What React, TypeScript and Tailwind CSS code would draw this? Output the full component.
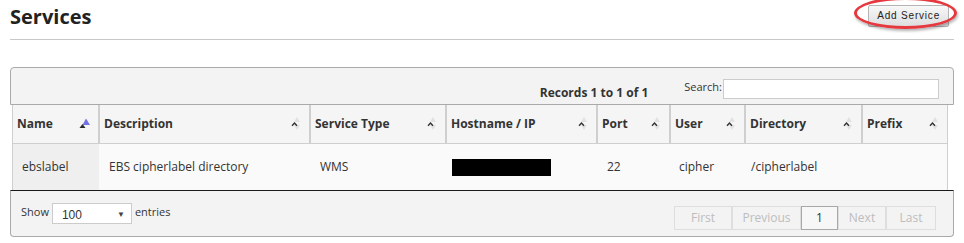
import React from 'react';

type Col = { key: string; label: string; width: number; sorted?: boolean; pad: string };

const columns: Col[] = [
  { key: 'name', label: 'Name', width: 87, sorted: true, pad: 'pl-[9px]' },
  { key: 'description', label: 'Description', width: 211, pad: 'pl-[10px]' },
  { key: 'type', label: 'Service Type', width: 136, pad: 'pl-[10px]' },
  { key: 'host', label: 'Hostname / IP', width: 151, pad: 'pl-[6px]' },
  { key: 'port', label: 'Port', width: 73, pad: 'pl-[10px]' },
  { key: 'user', label: 'User', width: 75, pad: 'pl-[9px]' },
  { key: 'directory', label: 'Directory', width: 117, pad: 'pl-[6px]' },
  { key: 'prefix', label: 'Prefix', width: 86, pad: 'pl-[6px]' },
];

const SortIcon: React.FC = () => (
  <svg width="14" height="18" viewBox="0 0 14 18" className="shrink-0">
    <polygon points="8,2 11,7 5,7" fill="#e2e2e2" />
    <polygon points="5,10 11,10 8,15" fill="#e2e2e2" />
    <path d="M3 10.8 L5.5 8 L8 10.8" stroke="#333" strokeWidth="1.4" fill="none" />
  </svg>
);

const SortedIcon: React.FC = () => (
  <svg width="14" height="18" viewBox="0 0 14 18" className="shrink-0">
    <polygon points="1.5,13 7.5,13 4.5,9" fill="#2a2a2a" />
    <polygon points="8,3.5 12,10 4.5,10" fill="#7373e6" />
  </svg>
);

const pages = [
  { label: 'First', w: 'w-[58px]' },
  { label: 'Previous', w: 'w-[69px]' },
  { label: '1', w: 'w-[37px]', active: true },
  { label: 'Next', w: 'w-[48px]' },
  { label: 'Last', w: 'w-[50px]' },
];

const App: React.FC = () => {
  return (
    <div className="w-[964px] h-[243px] bg-white font-['Open_Sans',sans-serif] text-[#333]">
      {/* page title */}
      <div className="mx-[10px] h-[40px] flex items-center justify-between border-b border-[#c8c8c8]">
        <h1 className="text-[20px] font-bold text-[#222] leading-none -mt-[5px]">Services</h1>
        <div className="relative mr-[5px] -mt-[11px]">
          <button className="h-[22px] px-[8px] border border-[#b5b5b5] rounded-[2px] bg-gradient-to-b from-[#f8f8f8] to-[#dedede] font-['Liberation_Sans',Arial,sans-serif] text-[10px] tracking-[0.8px] text-[#222]">
            Add Service
          </button>
          <div className="absolute left-[-14px] top-[-4px] w-[103px] h-[32px] rounded-[50%] border-[3px] border-[#e5393f] shadow-[1px_2px_3px_rgba(0,0,0,0.3)] pointer-events-none" />
        </div>
      </div>

      {/* table panel */}
      <div className="mx-[10px] mt-[27px]">
        <div className="h-[38px] flex items-center justify-end pt-[5px] pr-[14px] border border-[#aaa] rounded-t-[4px] bg-[#f3f3f3]">
          <span className="text-[12px] font-bold text-[#333] mt-[8px] mr-[36px]">Records 1 to 1 of 1</span>
          <label className="flex items-center text-[11px] text-[#333]">
            <span className="-mt-[3px]">Search:</span>
            <input type="text" className="ml-[1px] w-[216px] h-[20px] border border-[#ccc] bg-white outline-none" />
          </label>
        </div>

        <table className="mx-[2px] w-[936px] table-fixed border-separate border-spacing-0">
          <colgroup>
            {columns.map((c) => (
              <col key={c.key} style={{ width: c.width }} />
            ))}
          </colgroup>
          <thead>
            <tr>
              {columns.map((c) => (
                <th
                  key={c.key}
                  className="h-[39px] p-0 border-x border-b border-[#cfcfcf] bg-[#f5f5f5] text-left"
                >
                  <div className="flex items-center justify-between pl-[4px] pr-[6px]">
                    <span className="text-[12px] font-bold text-[#333]">{c.label}</span>
                    {c.sorted ? <SortedIcon /> : <SortIcon />}
                  </div>
                </th>
              ))}
            </tr>
          </thead>
          <tbody>
            <tr className="text-[12px] text-[#333]">
              <td className={`h-[46px] ${columns[0].pad} bg-[#efefef] border-l border-[#cfcfcf]`}>ebslabel</td>
              <td className={`${columns[1].pad} bg-[#fafafa]`}>EBS cipherlabel directory</td>
              <td className={`${columns[2].pad} bg-[#fafafa]`}>WMS</td>
              <td className={`${columns[3].pad} bg-[#fafafa]`}>
                <div className="w-[99px] h-[17px] bg-black" />
              </td>
              <td className={`${columns[4].pad} bg-[#fafafa]`}>22</td>
              <td className={`${columns[5].pad} bg-[#fafafa]`}>cipher</td>
              <td className={`${columns[6].pad} bg-[#fafafa]`}>/cipherlabel</td>
              <td className="bg-[#fafafa] border-r border-[#cfcfcf]" />
            </tr>
          </tbody>
        </table>

        <div className="h-[47px] flex items-center justify-between pl-[10px] pr-[12px] border border-[#aaa] border-t-[#1a1a1a] rounded-b-[4px] bg-[#f3f3f3]">
          <div className="flex items-center text-[11px] text-[#333]">
            <span className="-mt-[2px]">Show</span>
            <div className="mx-[3px] w-[80px] h-[21px] flex items-center justify-between pl-[9px] pr-[6px] border border-[#ccc] bg-white">
              <span className="text-[12px] mt-[3px] font-['Liberation_Sans',Arial,sans-serif] text-[#333]">100</span>
              <span className="text-[8px] text-[#444]">▼</span>
            </div>
            <span className="-mt-[2px]">entries</span>
          </div>
          <div className="flex items-center mt-[8px] mr-[5px]">
            {pages.map((p) => (
              <span
                key={p.label}
                className={`h-[24px] flex items-center justify-center text-[12px] border ${p.w} ${
                  p.active ? 'border-[#a8a8a8] text-[#333] bg-[#f7f7f7]' : 'border-[#dedede] text-[#bdbdbd]'
                }`}
              >
                {p.label}
              </span>
            ))}
          </div>
        </div>
      </div>
    </div>
  );
};

export default App;
